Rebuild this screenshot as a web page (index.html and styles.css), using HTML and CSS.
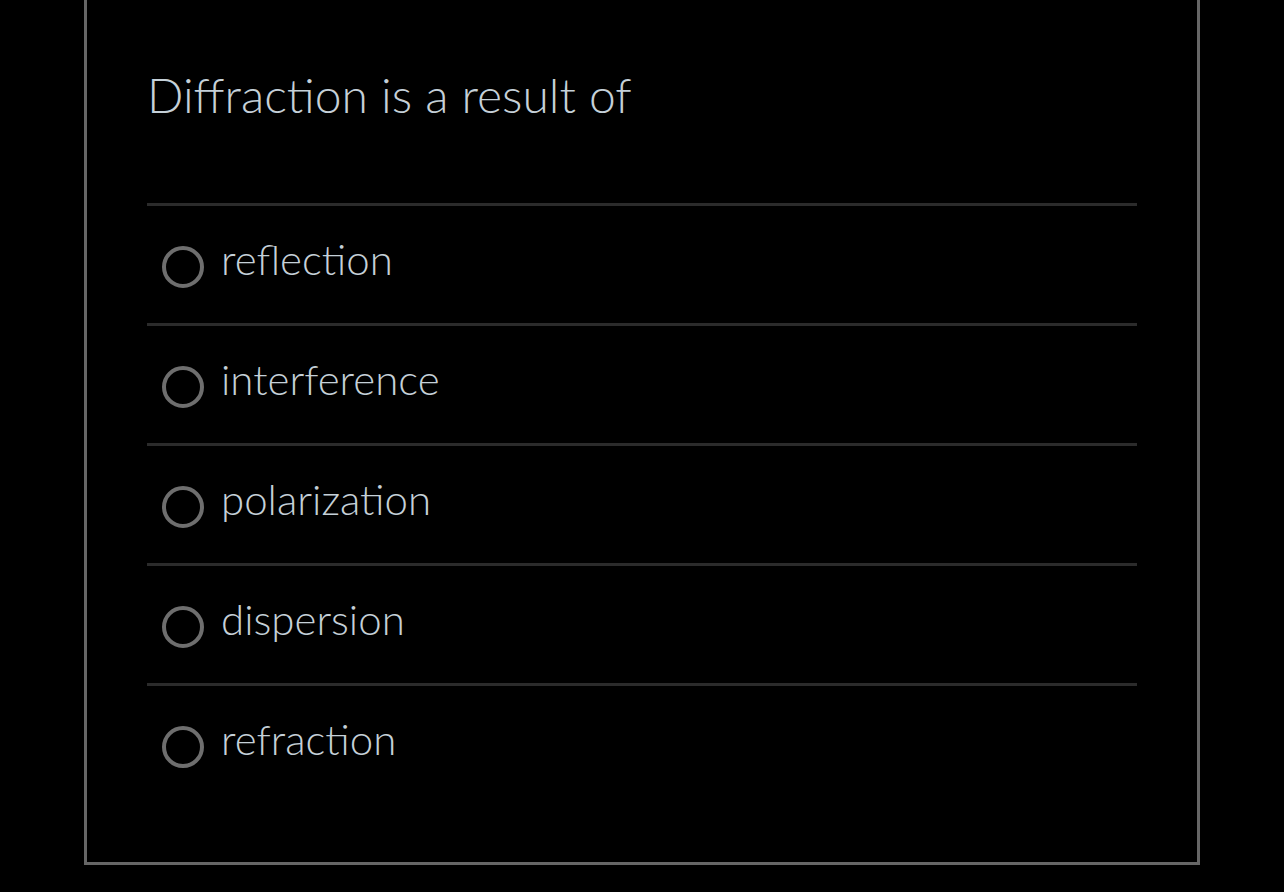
FILE: index.html
```html
<!DOCTYPE html>
<html lang="en">
<head>
<meta charset="utf-8">
<title>Question</title>
<link rel="stylesheet" href="styles.css">
</head>
<body>
<div class="card">
  <div class="question">Diffraction is a result of</div>
  <ul class="answers">
    <li class="answer"><span class="radio"></span><span class="label">reflection</span></li>
    <li class="answer"><span class="radio"></span><span class="label">interference</span></li>
    <li class="answer"><span class="radio"></span><span class="label">polarization</span></li>
    <li class="answer"><span class="radio"></span><span class="label">dispersion</span></li>
    <li class="answer"><span class="radio"></span><span class="label">refraction</span></li>
  </ul>
</div>
</body>
</html>
```
FILE: styles.css
```css
html, body {
  margin: 0;
  padding: 0;
  background: #000;
}
body {
  font-family: "Lato Light", Lato, "Open Sans", sans-serif;
  font-weight: 300;
  color: #c5d0d8;
  height: 892px;
  overflow: hidden;
}
.card {
  margin-left: 84px;
  border: 3px solid #666;
  border-top: none;
  padding: 0 60px 0 60px;
  box-sizing: border-box;
  width: 1116px;
  height: 865px;
}
.question {
  font-size: 48px;
  height: 203px;
  box-sizing: border-box;
  padding-top: 66px;
  line-height: 58px;
}
.answers {
  list-style: none;
  margin: 0;
  padding: 0;
}
.answer {
  border-top: 3px solid #2b2b2b;
  height: 117px;
  display: flex;
  align-items: center;
  padding-left: 15px;
}
.radio {
  width: 34px;
  height: 34px;
  border: 4px solid #6e6e6e;
  border-radius: 50%;
  flex: none;
  margin-top: 5px;
}
.label {
  font-size: 42px;
  margin-left: 17px;
  line-height: 50px;
  margin-top: -12px;
}
```
